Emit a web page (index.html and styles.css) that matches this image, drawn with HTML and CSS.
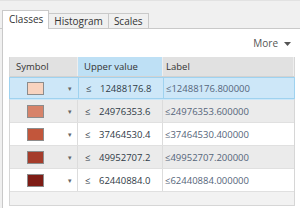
FILE: index.html
```html
<!DOCTYPE html>
<html>
<head>
<meta charset="utf-8">
<link rel="stylesheet" href="styles.css">
</head>
<body>
<div class="window">
  <div class="tabbar">
    <div class="tab active">Classes</div>
    <div class="tab">Histogram</div>
    <div class="tab">Scales</div>
  </div>
  <div class="panel">
    <div class="toolbar">
      <span class="more">More</span>
      <svg class="more-caret" width="7" height="4" viewBox="0 0 7 4"><path d="M0 0H7L3.5 4Z" fill="#555"/></svg>
    </div>
    <div class="grid">
      <div class="row head">
        <div class="cell c-sym">Symbol</div>
        <div class="cell c-up sel-head">Upper value</div>
        <div class="cell c-lab">Label</div>
      </div>
      <div class="row selected">
        <div class="cell c-sym"><span class="swatch s1"></span><span class="dd">▾</span></div>
        <div class="cell c-up"><span class="le">≤</span><span class="num">12488176.8</span></div>
        <div class="cell c-lab">≤12488176.800000</div>
      </div>
      <div class="row alt">
        <div class="cell c-sym"><span class="swatch s2"></span><span class="dd">▾</span></div>
        <div class="cell c-up"><span class="le">≤</span><span class="num">24976353.6</span></div>
        <div class="cell c-lab">≤24976353.600000</div>
      </div>
      <div class="row">
        <div class="cell c-sym"><span class="swatch s3"></span><span class="dd">▾</span></div>
        <div class="cell c-up"><span class="le">≤</span><span class="num">37464530.4</span></div>
        <div class="cell c-lab">≤37464530.400000</div>
      </div>
      <div class="row alt">
        <div class="cell c-sym"><span class="swatch s4"></span><span class="dd">▾</span></div>
        <div class="cell c-up"><span class="le">≤</span><span class="num">49952707.2</span></div>
        <div class="cell c-lab">≤49952707.200000</div>
      </div>
      <div class="row">
        <div class="cell c-sym"><span class="swatch s5"></span><span class="dd">▾</span></div>
        <div class="cell c-up"><span class="le">≤</span><span class="num">62440884.0</span></div>
        <div class="cell c-lab">≤62440884.000000</div>
      </div>
      <div class="filler"></div>
    </div>
  </div>
</div>
</body>
</html>
```
FILE: styles.css
```css
html, body {
  margin: 0;
  padding: 0;
}
body {
  width: 300px;
  height: 208px;
  overflow: hidden;
  background: #f0f0f0;
  font-family: "Open Sans", "Noto Sans", sans-serif;
  color: #333;
}
.window {
  display: flex;
  flex-direction: column;
  height: 208px;
}
.tabbar {
  display: flex;
  align-items: flex-end;
  height: 28px;
  padding-left: 2px;
  border-bottom: 1px solid #c9c9c9;
  border-top: 1px solid #e2e2e2;
  box-sizing: border-box;
  height: 29px;
}
.tab {
  height: 15px;
  line-height: 14px;
  padding: 0 5px 0 5px;
  border: 1px solid #c9c9c9;
  border-bottom: none;
  margin-left: -1px;
  font-size: 10px;
  color: #333;
  background: #f0f0f0;
  box-sizing: border-box;
}
.tab:first-child {
  margin-left: 0;
}
.tab.active {
  height: 19px;
  line-height: 17px;
  background: #fff;
  margin-bottom: -1px;
  position: relative;
  z-index: 1;
  padding: 0 5px 0 6px;
}
.panel {
  flex: 1;
  margin-left: 2px;
  background: #fff;
  border-left: 1px solid #c9c9c9;
  display: flex;
  flex-direction: column;
}
.toolbar {
  height: 28px;
  display: flex;
  align-items: center;
  justify-content: flex-end;
  padding-right: 9px;
  gap: 6px;
}
.more {
  font-size: 10px;
  color: #555;
}
.more-caret {
  margin-top: 1px;
}
.grid {
  margin-left: 6px;
  width: 286px;
  border: 1px solid #d6d6d6;
  border-top: none;
  box-sizing: border-box;
  font-size: 9.5px;
}
.row {
  display: grid;
  grid-template-columns: 68px 85px 131px;
  height: 23px;
  background: #fff;
  border-bottom: 1px solid #e0e0e0;
  box-sizing: border-box;
}
.row.alt {
  background: #ebebeb;
}
.row.head {
  height: 20px;
  background: #e1e1e1;
  border-bottom: 1px solid #d2d2d2;
}
.cell {
  display: flex;
  align-items: center;
  border-right: 1px solid #dcdcdc;
  box-sizing: border-box;
  min-width: 0;
}
.cell.c-lab {
  border-right: none;
  padding-left: 2px;
  color: #55657a;
}
.head .cell {
  color: #333;
  border-right: 1px solid #eeeeee;
}
.head .c-sym {
  padding-left: 6px;
}
.head .c-up {
  padding-left: 6px;
}
.head .c-lab {
  padding-left: 3px;
}
.head .sel-head {
  background: #bee0f5;
}
.row.selected {
  background: #cde7f8;
  border-bottom-color: #cde7f8;
}
.row.selected .cell {
  border: 1px solid #9fd2ef;
  margin-right: -1px;
}
.row.selected .cell:first-child {
  margin-left: -1px;
}
.c-sym {
  justify-content: flex-start;
  padding-left: 17px;
}
.swatch {
  width: 17px;
  height: 13px;
  border: 1px solid #8c8c8c;
  box-sizing: border-box;
}
.s1 { background: #f8d3bf; }
.s2 { background: #d7836a; }
.s3 { background: #c2563b; }
.s4 { background: #a53c2b; }
.s5 { background: #7e1c15; }
.dd {
  margin-left: 24px;
  font-size: 7px;
  color: #666;
}
.c-up {
  padding-left: 7px;
  color: #2f3a46;
}
.le {
  width: 14px;
}
.filler {
  height: 13px;
  background: #f2f2f2;
}
```
